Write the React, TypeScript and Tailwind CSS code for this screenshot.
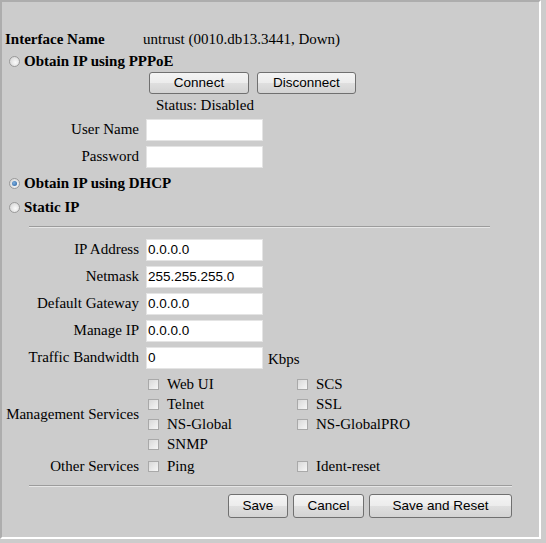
import React from "react";

function Radio({ checked }: { checked?: boolean }) {
  return (
    <span className="relative inline-flex items-center justify-center w-[11px] h-[11px] rounded-full border border-[#9a9a9a] bg-[radial-gradient(circle_at_60%_60%,#fbfbfb,#d0d0d0)] shrink-0">
      {checked && (
        <span className="w-[5px] h-[5px] rounded-full bg-[radial-gradient(circle_at_40%_40%,#7fb0e0,#1e5a9c)]" />
      )}
    </span>
  );
}

function Check() {
  return (
    <span className="inline-block w-[11px] h-[11px] border border-[#a9a9a9] bg-gradient-to-br from-[#d9d9d9] to-[#f6f6f6] shrink-0" />
  );
}

function Btn({ w, children }: { w: string; children: React.ReactNode }) {
  return (
    <span
      className={`${w} h-full inline-flex items-center justify-center border border-[#707070] rounded-[3px] bg-[linear-gradient(#f4f4f4,#ececec_50%,#dfdfdf_51%,#d3d3d3)] [font-family:'Liberation_Sans',Arial,sans-serif] text-[13.5px] text-black leading-none`}
    >
      {children}
    </span>
  );
}

function Field({ label, value, extra }: { label: string; value?: string; extra?: React.ReactNode }) {
  return (
    <div className="h-[27px] flex items-center">
      <span className="w-[134px] text-right">{label}</span>
      <span className="ml-[7px] w-[117px] h-[22px] bg-white border border-[#e4e4e4] flex items-center pl-[1px] [font-family:'Liberation_Sans',Arial,sans-serif] text-[13.5px]">
        {value}
      </span>
      {extra}
    </div>
  );
}

function CheckItem({ label }: { label: string }) {
  return (
    <span className="flex items-center">
      <span className="ml-[2px] flex">
        <Check />
      </span>
      <span className="ml-[8px]">{label}</span>
    </span>
  );
}

export default function App() {
  return (
    <div className="w-[546px] h-[543px] bg-[#cccccc]">
      <div className="w-[541px] h-[539px] border-2 border-t-[#adadad] border-l-[#adadad] border-r-white border-b-white bg-[#cccccc] text-[15px] text-black [font-family:'Liberation_Serif','Times_New_Roman',serif] flex flex-col pl-[3px] leading-none">
        <div className="h-[27px] shrink-0" />
        <div className="h-[21px] flex items-center">
          <span className="w-[138px] font-bold">Interface Name</span>
          <span>untrust (0010.db13.3441, Down)</span>
        </div>
        <div className="h-[22px] flex items-center">
          <span className="ml-[4px] flex">
            <Radio />
          </span>
          <span className="ml-[4px] font-bold">Obtain IP using PPPoE</span>
        </div>
        <div className="h-[22px] flex">
          <span className="ml-[144px] h-full flex">
            <Btn w="w-[100px]">Connect</Btn>
          </span>
          <span className="ml-[8px] h-full flex">
            <Btn w="w-[99px]">Disconnect</Btn>
          </span>
        </div>
        <div className="h-[22px] flex items-center">
          <span className="ml-[151px]">Status: Disabled</span>
        </div>
        <Field label="User Name" />
        <Field label="Password" />
        <div className="h-[26px] flex items-center">
          <span className="ml-[4px] flex">
            <Radio checked />
          </span>
          <span className="ml-[4px] font-bold">Obtain IP using DHCP</span>
        </div>
        <div className="h-[22px] flex items-center">
          <span className="ml-[4px] flex">
            <Radio />
          </span>
          <span className="ml-[4px] font-bold">Static IP</span>
        </div>
        <div className="h-[18px] flex items-center">
          <div className="ml-[24px] w-[461px] border-t border-t-[#9c9c9c] border-b border-b-[#e6e6e6]" />
        </div>
        <Field label="IP Address" value="0.0.0.0" />
        <Field label="Netmask" value="255.255.255.0" />
        <Field label="Default Gateway" value="0.0.0.0" />
        <Field label="Manage IP" value="0.0.0.0" />
        <Field
          label="Traffic Bandwidth"
          value="0"
          extra={<span className="ml-[5px] mt-[4px]">Kbps</span>}
        />
        <div className="h-[3px] shrink-0" />
        <div className="flex">
          <div className="w-[134px] flex items-center justify-end">Management Services</div>
          <div className="ml-[7px] grid grid-cols-[149px_auto] auto-rows-[20px] items-center">
            <CheckItem label="Web UI" />
            <CheckItem label="SCS" />
            <CheckItem label="Telnet" />
            <CheckItem label="SSL" />
            <CheckItem label="NS-Global" />
            <CheckItem label="NS-GlobalPRO" />
            <CheckItem label="SNMP" />
            <span />
          </div>
        </div>
        <div className="h-[24px] flex items-center">
          <span className="w-[134px] text-right">Other Services</span>
          <div className="ml-[7px] grid grid-cols-[149px_auto] items-center">
            <CheckItem label="Ping" />
            <CheckItem label="Ident-reset" />
          </div>
        </div>
        <div className="h-[16px] flex items-center">
          <div className="ml-[24px] w-[483px] border-t border-t-[#9c9c9c] border-b border-b-[#e6e6e6]" />
        </div>
        <div className="h-[24px] flex">
          <span className="ml-[223px] h-full flex">
            <Btn w="w-[60px]">Save</Btn>
          </span>
          <span className="ml-[5px] h-full flex">
            <Btn w="w-[71px]">Cancel</Btn>
          </span>
          <span className="ml-[5px] h-full flex">
            <Btn w="w-[143px]">Save and Reset</Btn>
          </span>
        </div>
      </div>
    </div>
  );
}
